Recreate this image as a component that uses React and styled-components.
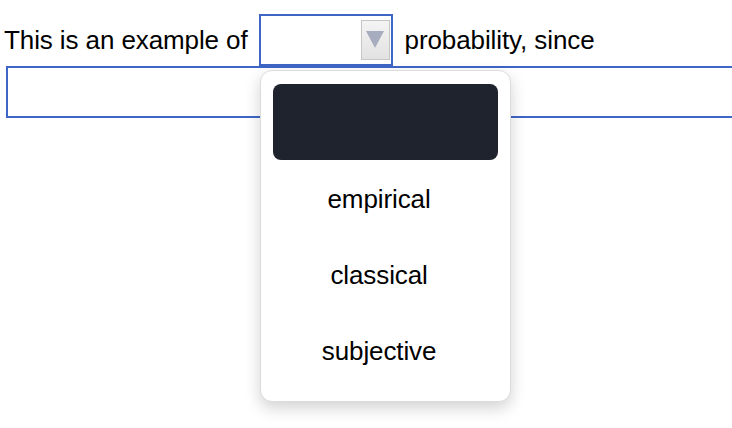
import styled, { createGlobalStyle } from "styled-components";

const Global = createGlobalStyle`
    html, body {
        margin: 0;
        padding: 0;
        background: #fff;
        overflow: hidden;
    }
    body {
        font-family: "Liberation Sans", Arial, sans-serif;
        color: #000;
    }
`;

const Page = styled.div`
    width: 732px;
    height: 428px;
    position: relative;
`;

const Line = styled.div`
    display: flex;
    align-items: center;
    height: 52px;
    margin-top: 14px;
    padding-left: 4px;
    font-size: 26px;
    letter-spacing: -0.1px;
    white-space: pre;
`;

const Select = styled.div`
    position: relative;
    box-sizing: border-box;
    width: 134px;
    height: 52px;
    margin: 0 12px 0 11px;
    border: 2px solid #3e66c6;
    background: #fff;
`;

const ArrowButton = styled.div`
    position: absolute;
    top: 4px;
    right: 1px;
    box-sizing: border-box;
    width: 29px;
    height: 40px;
    border: 1px solid #c6c6c6;
    background: linear-gradient(#f4f4f4, #e2e2e2);
    display: flex;
    align-items: center;
    justify-content: center;
`;

const Arrow = styled.div`
    width: 0;
    height: 0;
    border-left: 9px solid transparent;
    border-right: 9px solid transparent;
    border-top: 17px solid #a7acbe;
    margin-top: -2px;
`;

const Input = styled.div`
    box-sizing: border-box;
    margin-left: 6px;
    width: 726px;
    height: 52px;
    border: 2px solid #3e66c6;
    border-right: none;
`;

const Menu = styled.ul`
    position: absolute;
    top: 54px;
    left: -1px;
    z-index: 2;
    box-sizing: border-box;
    width: 251px;
    margin: 0;
    padding: 13px 12px 13px 12px;
    list-style: none;
    background: #fff;
    border: 1px solid #dcdcdc;
    border-radius: 12px;
    box-shadow: 0 6px 16px rgba(0, 0, 0, 0.18);
`;

const Option = styled.li`
    height: 76px;
    display: flex;
    align-items: center;
    justify-content: center;
    padding-right: 12px;
    padding-top: 2px;
    box-sizing: border-box;
    font-size: 26px;
    border-radius: 8px;
    background: ${(p) => (p.$active ? "#1f232e" : "transparent")};
    color: ${(p) => (p.$active ? "#fff" : "#000")};
`;

const options = ["", "empirical", "classical", "subjective"];

const App = () => {
  return (
    <Page>
      <Global />
      <Line>
        <span>This is an example of</span>
        <Select>
          <ArrowButton>
            <Arrow />
          </ArrowButton>
          <Menu>
            {options.map((o, i) => (
              <Option key={i} $active={i === 0}>{o}</Option>
            ))}
          </Menu>
        </Select>
        <span>probability, since</span>
      </Line>
      <Input />
    </Page>
  );
};

export default App;
